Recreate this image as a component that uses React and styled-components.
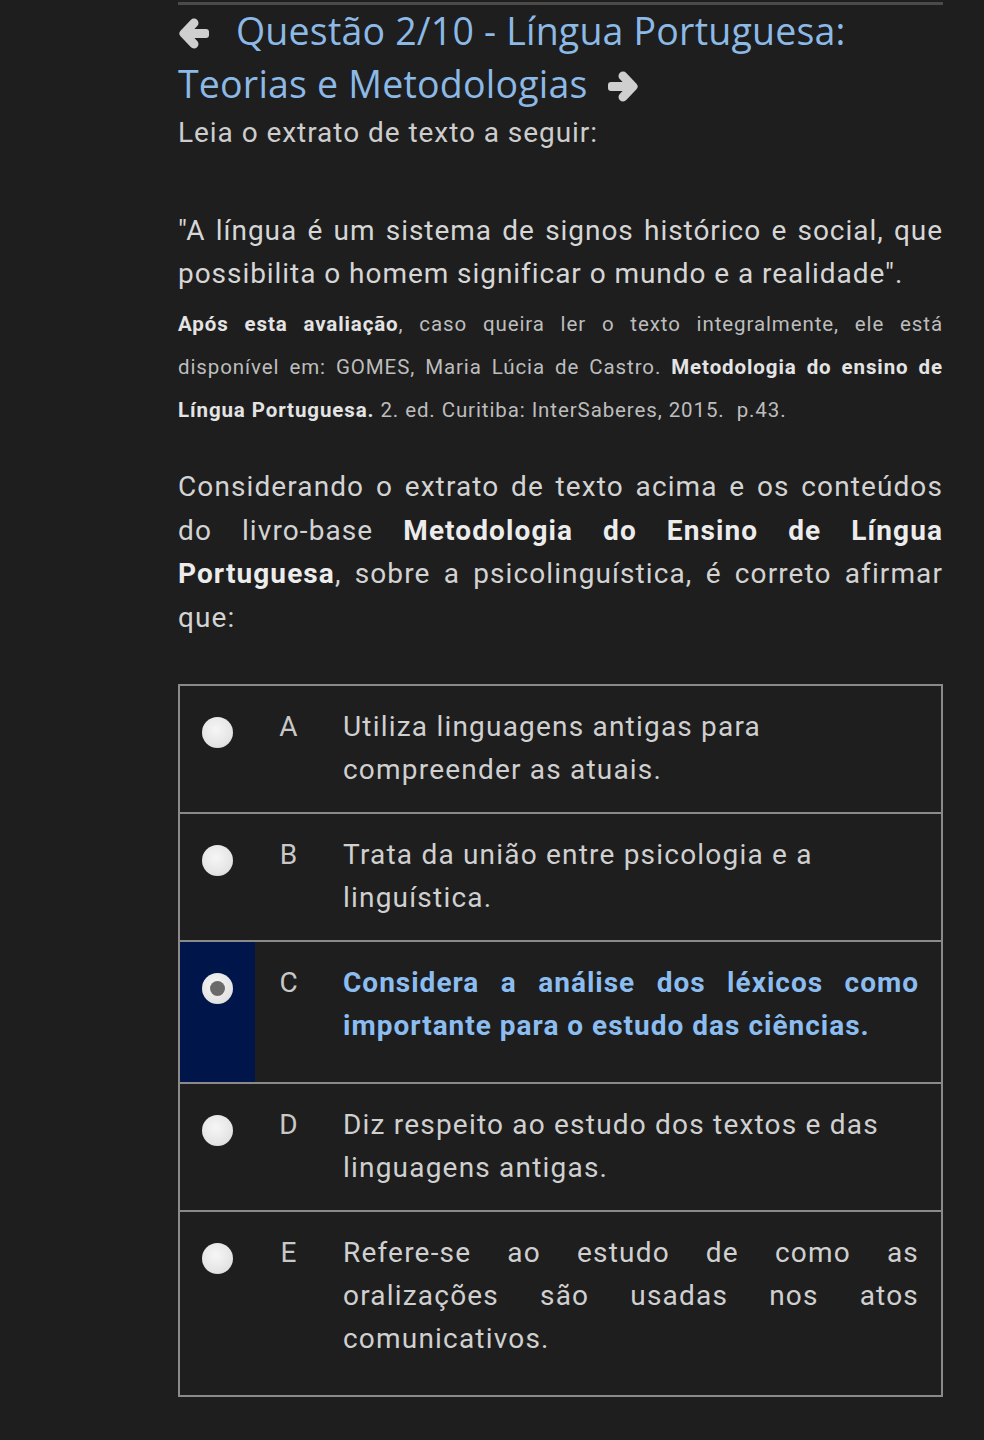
import React from 'react';
import styled, { createGlobalStyle } from 'styled-components';

const GlobalStyle = createGlobalStyle`
  html, body {
    margin: 0;
    padding: 0;
    background: #1e1e1e;
  }
  body {
    font-family: Roboto, "Liberation Sans", sans-serif;
  }
`;

const Page = styled.div`
  width: 765px;
  margin-left: 178px;
  padding-bottom: 45px;
  color: #cfcfcf;
`;

const TopRule = styled.div`
  height: 3px;
  margin-top: 2px;
  background: #4a4a4a;
`;

const Title = styled.h1`
  margin: -1px 0 0;
  font-family: "Open Sans", Roboto, sans-serif;
  font-weight: 400;
  font-size: 37.5px;
  line-height: 53px;
  letter-spacing: 0.2px;
  color: #8cb9e6;
`;

const Arrow = styled.svg`
  width: 30px;
  height: 31px;
  vertical-align: -4px;
  margin: ${(p) => (p.$left ? '0 27px 0 1px' : '0 0 0 21px')};
`;

const Lead = styled.p`
  margin: 3px 0 0;
  font-size: 28px;
  line-height: 40px;
  letter-spacing: 0.95px;
  color: #cdcdcd;
`;

const Quote = styled.p`
  margin: 56px 0 0;
  font-size: 28px;
  line-height: 43px;
  letter-spacing: 0.95px;
  text-align: justify;
  color: #d6d6d6;
`;

const Source = styled.p`
  margin: 8px 0 0;
  font-size: 20.5px;
  line-height: 43px;
  letter-spacing: 0.9px;
  text-align: justify;
  color: #bdbdbd;

  b {
    color: #e4e4e4;
    font-weight: 700;
  }
`;

const Prompt = styled.p`
  margin: 33px 0 0;
  font-size: 28px;
  line-height: 43.5px;
  letter-spacing: 1.1px;
  text-align: justify;
  color: #d3d3d3;

  b {
    color: #ececec;
    font-weight: 700;
  }
`;

const Options = styled.div`
  margin-top: 45px;
  border: 2px solid #8a8a8a;
`;

const Option = styled.div`
  display: grid;
  grid-template-columns: 75px 67px 1fr;
  border-top: ${(p) => (p.$first ? 'none' : '2px solid #8a8a8a')};
`;

const RadioCell = styled.div`
  background: ${(p) => (p.$selected ? '#00164a' : 'transparent')};
  padding-top: 31px;
  display: flex;
  justify-content: center;
`;

const Radio = styled.span`
  width: 31px;
  height: 31px;
  border-radius: 50%;
  background: radial-gradient(circle at 45% 40%, #f6f6f6 0%, #e4e4e4 65%, #cdcdcd 100%);
  display: flex;
  align-items: center;
  justify-content: center;

  &::after {
    content: '';
    display: ${(p) => (p.$checked ? 'block' : 'none')};
    width: 15px;
    height: 15px;
    border-radius: 50%;
    background: #6a6a6a;
  }
`;

const Letter = styled.div`
  padding-top: 19px;
  font-size: 28px;
  line-height: 43px;
  text-align: center;
  color: #c8c8c8;
`;

const Text = styled.div`
  padding: 19px 22px ${(p) => (p.$justify ? 35 : 21)}px 21px;
  font-size: 28px;
  line-height: 43px;
  letter-spacing: ${(p) => (p.$selected ? '1px' : '1.2px')};
  text-align: ${(p) => (p.$justify ? 'justify' : 'left')};
  color: ${(p) => (p.$selected ? '#8cbdf0' : '#d0d0d0')};
  font-weight: ${(p) => (p.$selected ? 700 : 400)};
`;

const options = [
  { key: 'A', text: 'Utiliza linguagens antigas para compreender as atuais.' },
  { key: 'B', text: 'Trata da união entre psicologia e a linguística.' },
  {
    key: 'C',
    text: 'Considera a análise dos léxicos como importante para o estudo das ciências.',
    selected: true,
    justify: true,
  },
  { key: 'D', text: 'Diz respeito ao estudo dos textos e das linguagens antigas.' },
  {
    key: 'E',
    text: 'Refere-se ao estudo de como as oralizações são usadas nos atos comunicativos.',
    justify: true,
  },
];

const ArrowLeft = () => (
  <Arrow $left viewBox="0 0 30 31">
    <path
      d="M15 5 L5 15.5 L15 26"
      fill="none"
      stroke="#cfcfcf"
      strokeWidth="9"
      strokeLinecap="round"
      strokeLinejoin="round"
    />
    <rect x="6" y="11" width="24" height="9" rx="3" fill="#cfcfcf" />
  </Arrow>
);

const ArrowRight = () => (
  <Arrow viewBox="0 0 30 31">
    <path
      d="M15 5 L25 15.5 L15 26"
      fill="none"
      stroke="#cfcfcf"
      strokeWidth="9"
      strokeLinecap="round"
      strokeLinejoin="round"
    />
    <rect x="0" y="11" width="24" height="9" rx="3" fill="#cfcfcf" />
  </Arrow>
);

const App = () => (
  <>
    <GlobalStyle />
    <Page>
      <TopRule />
      <Title>
        <ArrowLeft />
        Questão 2/10 - Língua Portuguesa: Teorias e Metodologias
        <ArrowRight />
      </Title>
      <Lead>Leia o extrato de texto a seguir:</Lead>

      <Quote>
        "A língua é um sistema de signos histórico e social, que possibilita o
        homem significar o mundo e a realidade".
      </Quote>

      <Source>
        <b>Após esta avaliação</b>, caso queira ler o texto integralmente, ele
        está disponível em: GOMES, Maria Lúcia de Castro.{' '}
        <b>Metodologia do ensino de Língua Portuguesa.</b> 2. ed. Curitiba:
        InterSaberes, 2015.&nbsp; p.43.
      </Source>

      <Prompt>
        Considerando o extrato de texto acima e os conteúdos do livro-base{' '}
        <b>Metodologia do Ensino de Língua Portuguesa</b>, sobre a
        psicolinguística, é correto afirmar que:
      </Prompt>

      <Options>
        {options.map((o, i) => (
          <Option key={o.key} $first={i === 0}>
            <RadioCell $selected={o.selected}>
              <Radio $checked={o.selected} />
            </RadioCell>
            <Letter>{o.key}</Letter>
            <Text $selected={o.selected} $justify={o.justify}>
              {o.text}
            </Text>
          </Option>
        ))}
      </Options>
    </Page>
  </>
);

export default App;
